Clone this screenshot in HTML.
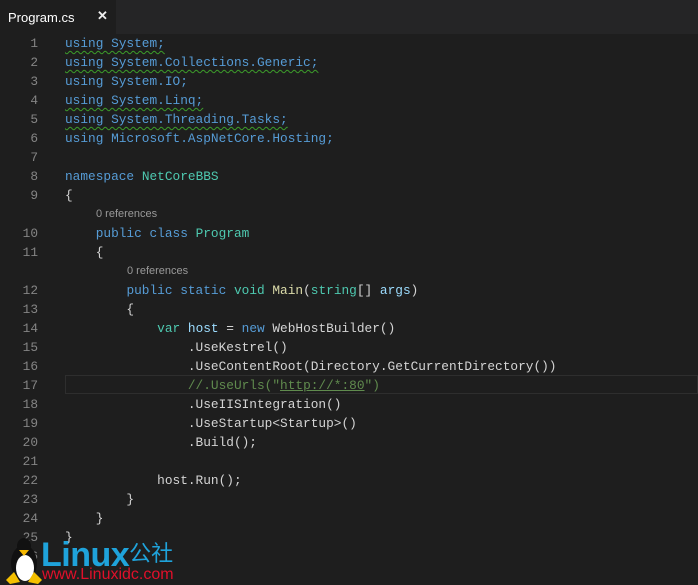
<!DOCTYPE html>
<html><head><meta charset="utf-8"><style>
body{margin:0;width:698px;height:585px;background:#1e1e1e;overflow:hidden;position:relative;font-family:"Liberation Mono",monospace}
.tabbar{position:absolute;left:0;top:0;width:698px;height:34px;background:#252526}
.tab{position:absolute;left:0;top:0;width:116px;height:34px;background:#1e1e1e;color:#fff;font:13px "Liberation Sans",sans-serif}
.tab span{position:absolute;left:8px;top:10px}
.tab b{position:absolute;left:97px;top:8px;font-size:13px;color:#eee}
.ln{position:absolute;left:0;width:38px;text-align:right;color:#858585;font-size:12.8px;line-height:19px}
.cd{position:absolute;left:65px;white-space:pre;color:#d4d4d4;font-size:12.8px;line-height:19px}
.k{color:#569cd6}.t{color:#4ec9b0}.m{color:#dcdcaa}.v{color:#9cdcfe}.c{color:#608b4e}
.w{text-decoration:underline wavy #3c9d2a;text-decoration-thickness:1px;text-underline-offset:3px}
.lens{position:absolute;color:#999;font:11px "Liberation Sans",sans-serif;line-height:19px}
.cur{position:absolute;left:65px;right:0;height:17px;border:1px solid #2e2e2e;top:375px}
</style></head><body>
<div class="tabbar"><div class="tab"><span>Program.cs</span><b>✕</b></div></div>
<div class="cur"></div>
<div class="cd" style="top:34px"><span class="w"><span class="k">using System;</span></span>
<span class="w"><span class="k">using System.Collections.Generic;</span></span>
<span class="k">using System.IO;</span>
<span class="w"><span class="k">using System.Linq;</span></span>
<span class="w"><span class="k">using System.Threading.Tasks;</span></span>
<span class="k">using Microsoft.AspNetCore.Hosting;</span>

<span class="k">namespace</span> <span class="t">NetCoreBBS</span>
{

    <span class="k">public class</span> <span class="t">Program</span>
    {

        <span class="k">public static</span> <span class="t">void</span> <span class="m">Main</span>(<span class="t">string</span>[] <span class="v">args</span>)
        {
            <span class="t">var</span> <span class="v">host</span> = <span class="k">new</span> WebHostBuilder()
                .UseKestrel()
                .UseContentRoot(Directory.GetCurrentDirectory())
                <span class="c">//.UseUrls("<u>http://*:80</u>")</span>
                .UseIISIntegration()
                .UseStartup&lt;Startup&gt;()
                .Build();

            host.Run();
        }
    }
}</div>
<div class="lens" style="left:96px;top:205px">0 references</div>
<div class="lens" style="left:127px;top:262px">0 references</div>
<div class="ln" style="top:34px">1<br>2<br>3<br>4<br>5<br>6<br>7<br>8<br>9<br><br>10<br>11<br><br>12<br>13<br>14<br>15<br>16<br>17<br>18<br>19<br>20<br>21<br>22<br>23<br>24<br>25<br>26</div>
<svg style="position:absolute;left:4px;top:536px" width="40" height="49" viewBox="0 0 40 49">
<ellipse cx="20" cy="27" rx="13" ry="18" fill="#111"/>
<ellipse cx="21" cy="32" rx="9" ry="13" fill="#fff"/>
<ellipse cx="20" cy="10" rx="7" ry="8" fill="#111"/>
<path d="M15 14 L25 14 L20 20Z" fill="#f5b800"/>
<path d="M2 44 L10 36 L16 46 L6 48Z M38 44 L30 36 L24 46 L34 48Z" fill="#f5c000"/>
</svg>
<div style="position:absolute;left:41px;top:536px;color:#1fa3db;font:bold 34px 'Liberation Sans',sans-serif;line-height:34px;letter-spacing:-0.5px">Linux<span style="font:22px 'Noto Sans CJK SC',sans-serif;vertical-align:5px;letter-spacing:0">公社</span></div>
<div style="position:absolute;left:42px;top:566px;color:#e0102a;font:16px 'Liberation Sans',sans-serif;line-height:18px">www.Linuxidc.com</div>
</body></html>
